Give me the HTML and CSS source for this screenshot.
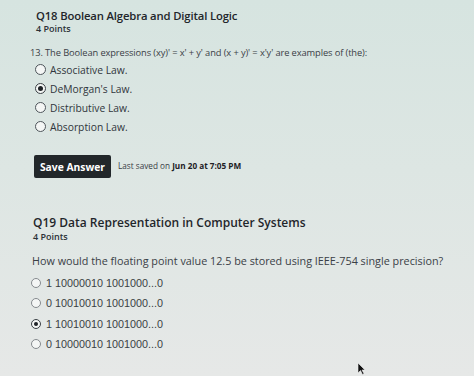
FILE: index.html
```html
<!DOCTYPE html>
<html>
<head>
<meta charset="utf-8">
<link rel="stylesheet" href="styles.css">
</head>
<body>
<div class="page">
  <section class="q q18">
    <h2 class="qtitle">Q18 Boolean Algebra and Digital Logic</h2>
    <div class="points">4 Points</div>
    <p class="prompt small">13. The Boolean expressions (xy)' = x' + y' and (x + y)' = x'y' are examples of (the):</p>
    <ul class="opts opts1">
      <li><span class="radio"></span>Associative Law.</li>
      <li><span class="radio on"></span>DeMorgan's Law.</li>
      <li><span class="radio"></span>Distributive Law.</li>
      <li><span class="radio"></span>Absorption Law.</li>
    </ul>
    <div class="saverow">
      <button class="save">Save Answer</button>
      <span class="saved">Last saved on <b>Jun 20 at 7:05 PM</b></span>
    </div>
  </section>
  <section class="q q19">
    <h2 class="qtitle">Q19 Data Representation in Computer Systems</h2>
    <div class="points">4 Points</div>
    <p class="prompt">How would the floating point value 12.5 be stored using IEEE-754 single precision?</p>
    <ul class="opts opts2">
      <li><span class="radio"></span>1 10000010 1001000...0</li>
      <li><span class="radio"></span>0 10010010 1001000...0</li>
      <li><span class="radio on"></span>1 10010010 1001000...0</li>
      <li><span class="radio"></span>0 10000010 1001000...0</li>
    </ul>
  </section>
  <svg class="cursor" width="9" height="13" viewBox="0 0 9 13"><path d="M1 1 L1 11 L3.5 8.5 L5.5 12.5 L7 11.8 L5 8 L8 8 Z" fill="#111" stroke="#eee" stroke-width="0.6"/></svg>
</div>
</body>
</html>
```

FILE: styles.css
```css
html, body {
  margin: 0;
  padding: 0;
}
body {
  width: 474px;
  height: 376px;
  overflow: hidden;
  background: linear-gradient(180deg, #d6e4e0 0%, #dde6e3 45%, #e6e8e7 100%);
  font-family: "Open Sans", "Noto Sans", sans-serif;
  color: #2b3137;
}
.page {
  position: relative;
  height: 376px;
}
.q18 {
  padding: 7.7px 0 0 36px;
}
.q19 {
  padding: 36.8px 0 0 33px;
}
.qtitle {
  margin: 0;
  font-size: 11.3px;
  line-height: 15.3px;
  letter-spacing: -0.15px;
  font-weight: 600;
  color: #1f262b;
}
.q19 .qtitle {
  font-size: 12px;
  line-height: 16px;
  letter-spacing: 0;
}
.points {
  font-size: 9px;
  line-height: 11px;
  font-weight: 600;
  color: #2b3137;
}
.prompt {
  margin: 12px 0 0 -1px;
  font-size: 10.8px;
  line-height: 14px;
  color: #3a4046;
  white-space: nowrap;
}
.prompt.small {
  margin: 11.6px 0 0 -6px;
  font-size: 9.3px;
  line-height: 13px;
  letter-spacing: -0.1px;
}
.opts {
  list-style: none;
  margin: 0;
  padding: 0;
}
.opts li {
  display: flex;
  align-items: center;
  color: #30363c;
}
.opts1 {
  margin-top: 1.9px;
  margin-left: -1px;
}
.opts1 li {
  height: 19px;
  font-size: 10.3px;
  gap: 4px;
}
.opts2 {
  margin-top: 5px;
  margin-left: -2px;
}
.opts2 li {
  height: 20.3px;
  font-family: "Liberation Sans", Arial, sans-serif;
  font-size: 10.8px;
  gap: 5px;
  color: #3a3f44;
}
.radio {
  box-sizing: border-box;
  width: 11px;
  height: 11px;
  border-radius: 50%;
  border: 1px solid #4e555b;
  background: #f4f6f5;
  display: inline-flex;
  align-items: center;
  justify-content: center;
  flex: none;
}
.opts2 .radio {
  width: 10px;
  height: 10px;
  border-color: #858a8e;
}
.radio.on {
  border-color: #3a4045;
}
.radio.on::after {
  content: "";
  width: 5px;
  height: 5px;
  border-radius: 50%;
  background: #1e2226;
}
.opts2 .radio.on::after {
  width: 4px;
  height: 4px;
}
.saverow {
  display: flex;
  align-items: center;
  gap: 7px;
  margin-top: 18.7px;
  margin-left: -2px;
}
.save {
  background: #22272a;
  color: #fff;
  border: none;
  font-family: "Open Sans", "Noto Sans", sans-serif;
  font-weight: 700;
  font-size: 10.3px;
  height: 23px;
  width: 77px;
  padding: 0;
  border-radius: 2px;
}
.saved {
  font-size: 8.2px;
  color: #3a4046;
  margin-top: -2px;
}
.saved b {
  color: #1e2226;
}
.cursor {
  position: absolute;
  left: 357px;
  top: 362px;
}
```
